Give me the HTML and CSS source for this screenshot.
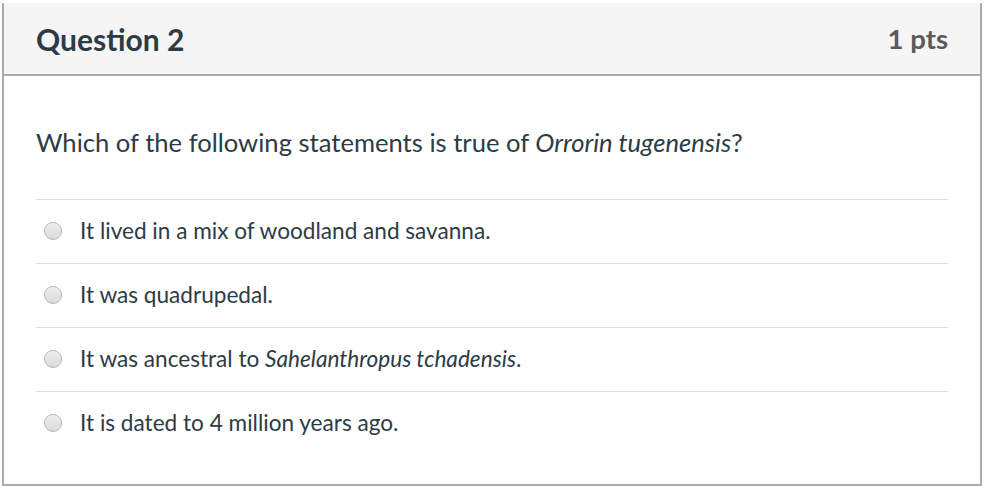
FILE: index.html
```html
<!DOCTYPE html>
<html lang="en">
<head>
<meta charset="utf-8">
<title>Question 2</title>
<link rel="stylesheet" href="styles.css">
</head>
<body>
<div class="question">
  <div class="question-header">
    <h2 class="question-title">Question 2</h2>
    <div class="question-points">1 pts</div>
  </div>
  <div class="question-body">
    <p class="question-text">Which of the following statements is true of <em>Orrorin tugenensis</em>?</p>
    <div class="answers">
      <label class="answer"><span class="radio"></span><span class="answer-text">It lived in a mix of woodland and savanna.</span></label>
      <label class="answer"><span class="radio"></span><span class="answer-text">It was quadrupedal.</span></label>
      <label class="answer"><span class="radio"></span><span class="answer-text">It was ancestral to <em>Sahelanthropus tchadensis</em>.</span></label>
      <label class="answer"><span class="radio"></span><span class="answer-text">It is dated to 4 million years ago.</span></label>
    </div>
  </div>
</div>
</body>
</html>
```

FILE: styles.css
```css
html, body {
  margin: 0;
  padding: 0;
  background: #ffffff;
}

body {
  font-family: Lato, "Open Sans", "Liberation Sans", sans-serif;
  color: #2d3b45;
}

.question {
  margin: 3px 0 0 2px;
  width: 976px;
  border-left: 2px solid #aaaaaa;
  border-right: 2px solid #aaaaaa;
  border-bottom: 2px solid #aaaaaa;
}

.question-header {
  display: flex;
  align-items: center;
  justify-content: space-between;
  height: 71px;
  padding: 0 32px;
  background: #f5f5f5;
  border-bottom: 2px solid #aaaaaa;
}

.question-title {
  margin: 0;
  font-size: 30px;
  font-weight: 700;
  color: #2d3b45;
}

.question-points {
  font-size: 27.5px;
  font-weight: 700;
  color: #5a5a5a;
}

.question-body {
  padding: 48px 32px 29px;
}

.question-text {
  margin: 0 0 39px;
  font-size: 25.6px;
  line-height: 36px;
}

.answer {
  display: flex;
  align-items: center;
  gap: 18px;
  height: 61px;
  padding: 0 0 2px 8px;
  border-top: 1px solid #dddddd;
  font-size: 22.6px;
}

.radio {
  flex: none;
  width: 16px;
  height: 16px;
  border-radius: 50%;
  border: 1px solid #b4b4b4;
  background: linear-gradient(#ececec, #dcdcdc);
  box-shadow: inset 0 1px 1px rgba(255,255,255,0.8);
}

.answer-text em,
.question-text em {
  font-style: italic;
}
```
